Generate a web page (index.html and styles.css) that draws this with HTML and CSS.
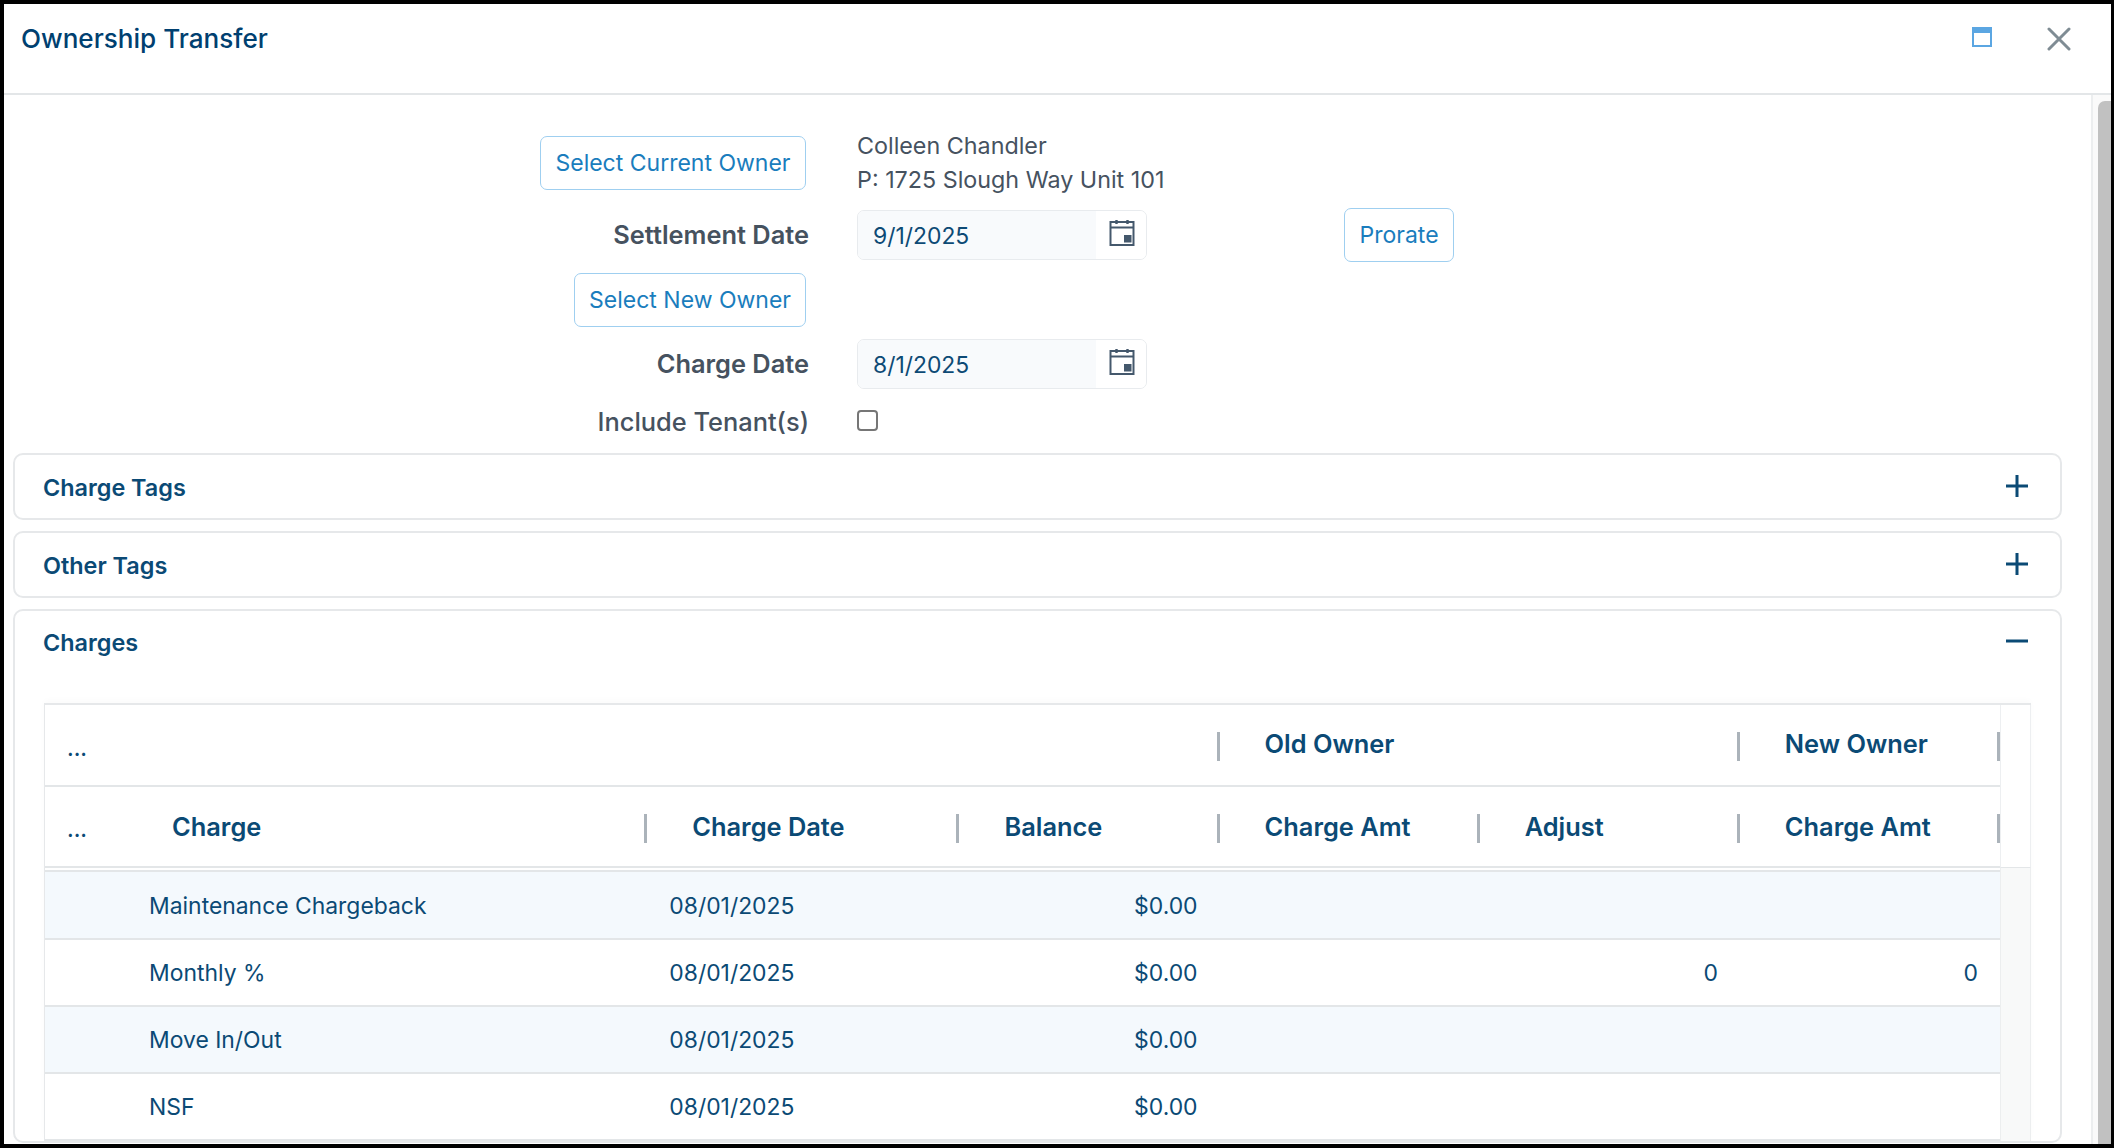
FILE: index.html
```html
<!DOCTYPE html>
<html lang="en">
<head>
<meta charset="utf-8">
<title>Ownership Transfer</title>
<link rel="stylesheet" href="styles.css">
</head>
<body>
<div class="modal">
  <header class="modal-head">
    <h1 class="modal-title">Ownership Transfer</h1>
    <div class="modal-actions">
      <svg class="ico-max" viewBox="0 0 20 20" width="20" height="20"><rect x="1" y="1" width="18" height="18" fill="#fff" stroke="#5ba6e2" stroke-width="2"/><rect x="0" y="0" width="20" height="6" fill="#5ba6e2"/></svg>
      <svg class="ico-close" viewBox="0 0 24 24" width="24" height="24"><path d="M2 2 L22 22 M22 2 L2 22" fill="none" stroke="#7f8c94" stroke-width="3" stroke-linecap="round"/></svg>
    </div>
  </header>
  <div class="modal-main">
    <div class="modal-body">
      <div class="form">
        <div class="row r-owner">
          <div class="lbl"><button class="btn btn-in-lbl">Select Current Owner</button></div>
          <div class="val owner-text">Colleen Chandler<br>P: 1725 Slough Way Unit 101</div>
        </div>
        <div class="row r-btn">
          <div class="lbl strong">Settlement Date</div>
          <div class="val">
            <div class="date"><span class="date-text">9/1/2025</span><span class="date-ico"><svg viewBox="0 0 26 26" width="26" height="26"><path d="M1.5 2 H24.5 V25 H1.5 Z M1.5 7.5 H24.5" fill="none" stroke="#44586c" stroke-width="2"/><path d="M7.5 0 V4 M18.5 0 V4" stroke="#44586c" stroke-width="2.4"/><rect x="15" y="15" width="7.5" height="7.5" fill="#44586c"/></svg></span></div>
          </div>
          <button class="btn btn-prorate">Prorate</button>
        </div>
        <div class="row r-btn">
          <div class="lbl"><button class="btn btn-in-lbl btn-new">Select New Owner</button></div>
        </div>
        <div class="row r-date">
          <div class="lbl strong">Charge Date</div>
          <div class="val">
            <div class="date"><span class="date-text">8/1/2025</span><span class="date-ico"><svg viewBox="0 0 26 26" width="26" height="26"><path d="M1.5 2 H24.5 V25 H1.5 Z M1.5 7.5 H24.5" fill="none" stroke="#44586c" stroke-width="2"/><path d="M7.5 0 V4 M18.5 0 V4" stroke="#44586c" stroke-width="2.4"/><rect x="15" y="15" width="7.5" height="7.5" fill="#44586c"/></svg></span></div>
          </div>
        </div>
        <div class="row r-check">
          <div class="lbl medium">Include Tenant(s)</div>
          <div class="val"><span class="check"></span></div>
        </div>
      </div>

      <section class="acc">
        <div class="acc-head"><span>Charge Tags</span><svg class="acc-ico" viewBox="0 0 22 22" width="22" height="22"><path d="M0 11 H22 M11 0 V22" stroke="#0b4a75" stroke-width="3"/></svg></div>
      </section>
      <section class="acc">
        <div class="acc-head"><span>Other Tags</span><svg class="acc-ico" viewBox="0 0 22 22" width="22" height="22"><path d="M0 11 H22 M11 0 V22" stroke="#0b4a75" stroke-width="3"/></svg></div>
      </section>
      <section class="acc acc-open">
        <div class="acc-head"><span>Charges</span><svg class="acc-ico" viewBox="0 0 22 22" width="22" height="22"><path d="M0 11 H22" stroke="#0b4a75" stroke-width="3"/></svg></div>
        <div class="grid-wrap">
          <div class="grid-main">
            <table class="grid">
              <colgroup>
                <col class="c-sel"><col class="c-charge"><col class="c-date"><col class="c-amt"><col class="c-amt"><col class="c-amt"><col class="c-amt">
              </colgroup>
              <thead>
                <tr class="h1">
                  <th class="dots">...</th>
                  <th colspan="3" class="sep"></th>
                  <th colspan="2" class="sep">Old Owner</th>
                  <th class="sep">New Owner</th>
                </tr>
                <tr class="h2">
                  <th class="dots">...</th>
                  <th class="sep th-charge">Charge</th>
                  <th class="sep">Charge Date</th>
                  <th class="sep">Balance</th>
                  <th class="sep">Charge Amt</th>
                  <th class="sep">Adjust</th>
                  <th class="sep">Charge Amt</th>
                </tr>
              </thead>
              <tbody>
                <tr class="alt"><td></td><td>Maintenance Chargeback</td><td class="td-date">08/01/2025</td><td class="num">$0.00</td><td class="num"></td><td class="num"></td><td class="num"></td></tr>
                <tr><td></td><td>Monthly %</td><td class="td-date">08/01/2025</td><td class="num">$0.00</td><td class="num"></td><td class="num">0</td><td class="num">0</td></tr>
                <tr class="alt"><td></td><td>Move In/Out</td><td class="td-date">08/01/2025</td><td class="num">$0.00</td><td class="num"></td><td class="num"></td><td class="num"></td></tr>
                <tr><td></td><td>NSF</td><td class="td-date">08/01/2025</td><td class="num">$0.00</td><td class="num"></td><td class="num"></td><td class="num"></td></tr>
              </tbody>
            </table>
          </div>
          <div class="grid-scroll"><div class="grid-scroll-top"></div><div class="grid-scroll-track"></div></div>
        </div>
      </section>
    </div>
    <div class="scrollbar"><div class="thumb"></div></div>
  </div>
</div>
</body>
</html>
```

FILE: styles.css
```css
* { box-sizing: border-box; }
html, body { margin: 0; padding: 0; height: 100%; overflow: hidden; background: #000; }
body { font-family: Inter, "Liberation Sans", sans-serif; }

.modal {
  height: 1148px;
  border-style: solid;
  border-color: #000;
  border-width: 4px 3px 4px 4px;
  background: #fff;
  display: flex;
  flex-direction: column;
  overflow: hidden;
}
.modal-head {
  flex: 0 0 91px;
  border-bottom: 2px solid #e3e6e8;
  display: flex;
  justify-content: space-between;
  padding: 0 40px 0 17px;
}
.modal-title {
  margin: 12px 0 0;
  font-size: 26.1px;
  line-height: 46px;
  font-weight: 500;
  color: #004070;
}
.modal-actions { display: flex; align-items: flex-start; gap: 55px; padding-top: 23px; }
.ico-max { margin-top: 0; }

.modal-main { flex: 1; display: flex; min-height: 0; }
.modal-body { flex: 1; min-width: 0; padding: 0 29px 0 9px; overflow: hidden; }
.scrollbar { flex: 0 0 20px; background: #fafafa; border-left: 2px solid #eceeef; padding: 6px 0 0 5px; }
.thumb { height: 100%; background: #c1c1c1; border-radius: 7px 0 0 0; }

.form { padding-top: 34px; display: flex; flex-direction: column; gap: 11px; margin-bottom: 10px; }
.row { display: flex; align-items: center; margin-left: -9px; }
.r-owner { height: 68px; }
.r-btn { height: 54px; }
.r-date { height: 52px; }
.r-check { height: 42px; }
.lbl { flex: 0 0 805px; display: flex; justify-content: flex-end; font-size: 25.4px; line-height: 34px; color: #46525f; }
.strong { font-weight: 600; }
.medium { font-weight: 500; }
.val { flex: 0 0 290px; margin-left: 48px; font-size: 23.3px; line-height: 34px; color: #46525f; white-space: nowrap; }

.btn {
  height: 54px;
  padding: 0 14.5px;
  font: 400 23px/1 Inter, "Liberation Sans", sans-serif;
  color: #1a7dbd;
  background: #fff;
  border: 1px solid #9fcff0;
  border-radius: 7px;
}
.btn-in-lbl { margin-right: 3px; }
.btn-new { padding-left: 14px; padding-right: 14px; }
.btn-prorate { margin-left: 197px; }

.date { display: flex; height: 50px; border: 1px solid #e8ebee; border-radius: 7px; overflow: hidden; }
.date-text { flex: 1; background: #f8fafc; padding-left: 15px; line-height: 50px; color: #0d4a75; font-size: 22.9px; }
.date-ico { flex: 0 0 50px; display: flex; align-items: center; justify-content: center; background: #fff; padding: 0 0 5px 2px; }

.check { display: block; width: 21px; height: 21px; margin-top: -3px; border: 2px solid #767676; border-radius: 4px; background: #fff; }

.acc { border: 2px solid #e6e8ea; border-radius: 10px; margin-bottom: 11px; }
.acc-head {
  height: 63px;
  display: flex;
  align-items: center;
  justify-content: space-between;
  padding: 2px 32px 0 28px;
  font-size: 23.4px;
  font-weight: 600;
  color: #0b4a75;
}
.acc-ico { margin-top: -3px; }
.acc-open { margin-bottom: 0; }
.acc-open .acc-head { height: 60px; }

.grid-wrap { margin: 32px 29px 0 29px; display: flex; border-top: 2px solid #e6e8ea; box-shadow: 0 -3px 6px rgba(0,0,0,.02); }
.grid-main { flex: 0 0 1956px; border-left: 1px solid #e6e8ea; }
.grid { border-collapse: separate; border-spacing: 0; table-layout: fixed; width: 1955px; color: #0b4a75; font-size: 22.9px; }
.c-sel { width: 86px; }
.c-charge { width: 516px; }
.c-date { width: 312px; }
.c-amt { width: 260px; }
.grid th { position: relative; padding: 0 0 0 45px; font-size: 25.4px; font-weight: 600; text-align: left; border-bottom: 2px solid #e3e6e8; }
.h1 th { height: 82px; padding-bottom: 3px; }
.h2 th { height: 81px; padding-bottom: 1px; }
.grid th.th-charge { padding-left: 41px; }
.grid th.dots { padding: 5px 0 0 22px; font-size: 22px; font-weight: 500; }
.grid .sep::after {
  content: "";
  position: absolute;
  right: 0;
  top: 27px;
  width: 3px;
  height: 29px;
  background: #abb3ba;
}
.grid tbody tr:first-child td { border-top: 2px solid #e3e6e8; height: 70px; }
.grid tbody::before { content: ""; display: table-row; height: 2px; }
.grid td { height: 67px; padding: 1px 0 0 18px; border-bottom: 2px solid #e3e6e8; line-height: 30px; white-space: nowrap; }
.grid td.td-date { padding-left: 22px; }
.grid td.num { padding: 1px 22px 0 0; text-align: right; }
.alt td { background: #f4f9fd; }

.grid-scroll { flex: 1; display: flex; flex-direction: column; }
.grid-scroll-top { height: 163px; background: #fff; border-left: 1px solid #edeff1; border-right: 1px solid #edeff1; border-bottom: 1px solid #e3e6e8; }
.grid-scroll-track { flex: 1; background: #f8f9f9; border-left: 1px solid #eceeef; border-right: 1px solid #eceeef; }
```
